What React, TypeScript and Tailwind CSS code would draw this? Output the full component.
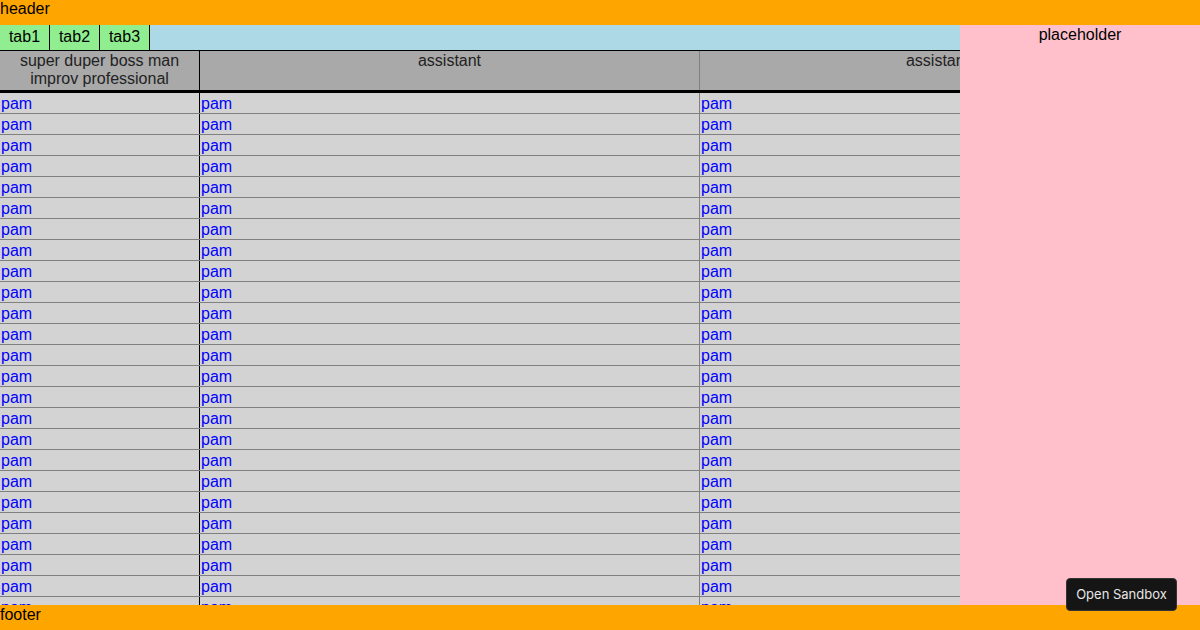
import React from "react";

const rows = Array.from({ length: 30 });

export default function App() {
  return (
    <div
      className="relative flex h-[630px] w-[1200px] flex-col overflow-hidden text-[16px] leading-[18.4px] text-black"
      style={{ fontFamily: '"Liberation Sans", Arial, sans-serif' }}
    >
      <div className="h-[25px] shrink-0 bg-[#ffa500]">header</div>
      <div className="flex min-h-0 flex-1">
        <div className="flex w-[960px] shrink-0 flex-col overflow-hidden">
          <div className="flex h-[25px] shrink-0 bg-[#add8e6]">
            {["tab1", "tab2", "tab3"].map((t) => (
              <div
                key={t}
                className="flex h-[25px] w-[50px] items-center justify-center border-r border-black bg-[#90ee90]"
              >
                {t}
              </div>
            ))}
          </div>
          <div className="min-h-0 flex-1 overflow-hidden">
            <div className="w-[1175px]">
              <div className="flex border-t border-b-[3px] border-black bg-[#a9a9a9] text-[#222]">
                <div className="h-[39px] w-[200px] shrink-0 border-r border-black pt-[1px] text-center">
                  super duper boss man
                  <br />
                  improv professional
                </div>
                <div className="h-[39px] w-[500px] shrink-0 border-r border-[#808080] pt-[1px] text-center">
                  assistant
                </div>
                <div className="h-[39px] w-[475px] shrink-0 pt-[1px] text-center">assistant</div>
              </div>
              {rows.map((_, i) => (
                <div key={i} className="flex h-[21px] border-b border-[#808080] bg-[#d3d3d3] text-[#0000ff]">
                  <div className="w-[200px] shrink-0 border-r border-black pl-[1px] pt-[1px] leading-[20px]">pam</div>
                  <div className="w-[500px] shrink-0 border-r border-[#808080] pl-[1px] pt-[1px] leading-[20px]">pam</div>
                  <div className="w-[475px] shrink-0 pl-[1px] pt-[1px] leading-[20px]">pam</div>
                </div>
              ))}
            </div>
          </div>
        </div>
        <div className="w-[240px] shrink-0 bg-[#ffc0cb] pt-[1px] text-center">placeholder</div>
      </div>
      <div className="h-[25px] shrink-0 bg-[#ffa500] pt-[1px]">footer</div>
      <button
        className="absolute bottom-[19px] right-[23px] flex h-[33px] w-[111px] items-center justify-center rounded-[4px] border border-[#333] bg-[#151515] text-[13px] text-[#e6e6e6]"
        style={{ fontFamily: 'Inter, "Liberation Sans", sans-serif' }}
      >
        Open Sandbox
      </button>
    </div>
  );
}
